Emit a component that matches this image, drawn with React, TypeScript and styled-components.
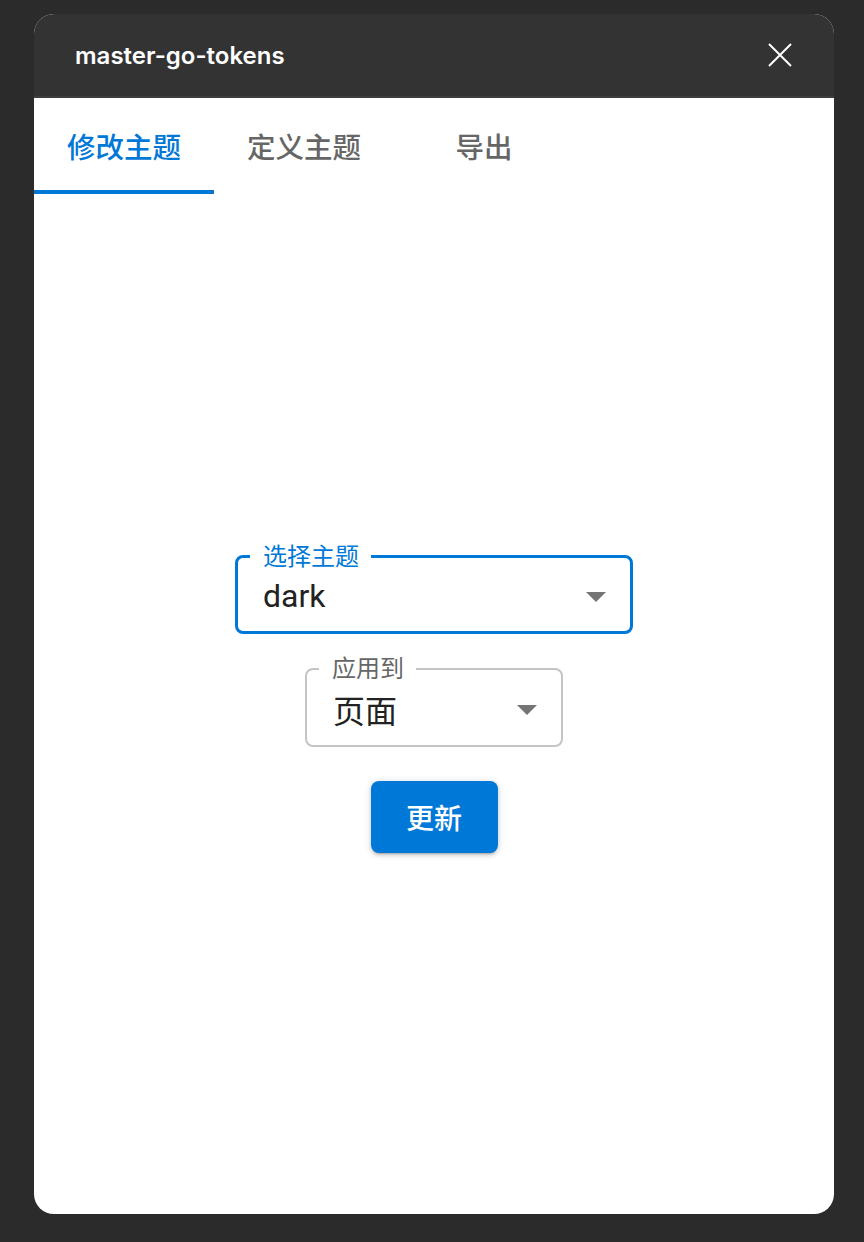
import React from "react";
import styled, { createGlobalStyle } from "styled-components";

const GlobalStyle = createGlobalStyle`
  html, body {
    margin: 0;
    padding: 0;
    background: #2b2b2b;
  }
  body {
    font-family: Roboto, "Noto Sans CJK SC", sans-serif;
  }
`;

const BLUE = "#0078d7";

const Page = styled.div`
  width: 864px;
  height: 1242px;
  box-sizing: border-box;
  padding: 14px 30px 28px 34px;
`;

const Window = styled.div`
  width: 800px;
  height: 1200px;
  border-radius: 20px;
  overflow: hidden;
  background: #ffffff;
  display: flex;
  flex-direction: column;
`;

const Header = styled.div`
  height: 82px;
  flex: none;
  background: #333333;
  border-bottom: 2px solid #3d3d3d;
  display: flex;
  align-items: center;
  justify-content: space-between;
  padding: 0 38px 0 41px;
`;

const Title = styled.div`
  font-family: Inter, "Noto Sans", sans-serif;
  font-size: 24px;
  font-weight: 600;
  color: #ffffff;
  letter-spacing: 0;
`;

const CloseButton = styled.button`
  width: 32px;
  height: 32px;
  border: none;
  background: none;
  padding: 0;
  display: flex;
  align-items: center;
  justify-content: center;
  cursor: pointer;
`;

const TabBar = styled.div`
  display: flex;
  height: 96px;
  flex: none;
`;

const Tab = styled.div<{ $active?: boolean }>`
  width: 180px;
  display: flex;
  align-items: center;
  justify-content: center;
  font-family: "Noto Sans CJK SC", sans-serif;
  font-size: 28.5px;
  font-weight: 500;
  color: ${({ $active }) => ($active ? BLUE : "#666666")};
  border-bottom: 4px solid ${({ $active }) => ($active ? BLUE : "transparent")};
  box-sizing: border-box;
  padding-top: 2px;
`;

const Body = styled.div`
  flex: 1;
  display: flex;
  flex-direction: column;
  align-items: center;
  justify-content: center;
  gap: 34px;
`;

const SelectBox = styled.div<{ $width: number; $focused?: boolean }>`
  position: relative;
  width: ${({ $width }) => $width}px;
  height: 79px;
  box-sizing: border-box;
  border: ${({ $focused }) => ($focused ? `3px solid ${BLUE}` : "2px solid #c4c4c4")};
  border-radius: 8px;
  display: flex;
  align-items: center;
  justify-content: space-between;
  padding: 0 24px 2px ${({ $focused }) => ($focused ? 25 : 26)}px;
`;

const FloatLabel = styled.span<{ $focused?: boolean }>`
  position: absolute;
  top: -18px;
  left: 12px;
  padding: 0 12px 0 13px;
  background: #ffffff;
  font-family: "Noto Sans CJK SC", sans-serif;
  font-size: 24px;
  line-height: 30px;
  color: ${({ $focused }) => ($focused ? BLUE : "#666666")};
`;

const Value = styled.span`
  font-family: Roboto, "Noto Sans CJK SC", sans-serif;
  font-size: 32px;
  color: #222222;
  padding-top: 5px;
`;

const Arrow = styled.span`
  width: 0;
  height: 0;
  border-left: 10px solid transparent;
  border-right: 10px solid transparent;
  border-top: 10px solid #757575;
  margin-top: 6px;
`;

const UpdateButton = styled.button`
  width: 127px;
  height: 72px;
  border: none;
  border-radius: 8px;
  background: ${BLUE};
  color: #ffffff;
  font-family: "Noto Sans CJK SC", sans-serif;
  font-size: 28px;
  font-weight: 500;
  box-shadow: 0 3px 2px -2px rgba(0, 0, 0, 0.2), 0 2px 4px 0 rgba(0, 0, 0, 0.14),
    0 1px 8px 0 rgba(0, 0, 0, 0.12);
  cursor: pointer;
`;

const tabs = ["修改主题", "定义主题", "导出"];

export default function App() {
  return (
    <Page>
      <GlobalStyle />
      <Window>
        <Header>
          <Title>master-go-tokens</Title>
          <CloseButton aria-label="close">
            <svg width="24" height="24" viewBox="0 0 24 24">
              <path d="M1 1L23 23M23 1L1 23" stroke="#ffffff" strokeWidth="2" />
            </svg>
          </CloseButton>
        </Header>
        <TabBar>
          {tabs.map((t, i) => (
            <Tab key={t} $active={i === 0}>
              {t}
            </Tab>
          ))}
        </TabBar>
        <Body>
          <SelectBox $width={398} $focused>
            <FloatLabel $focused>选择主题</FloatLabel>
            <Value>dark</Value>
            <Arrow />
          </SelectBox>
          <SelectBox $width={258}>
            <FloatLabel>应用到</FloatLabel>
            <Value>页面</Value>
            <Arrow />
          </SelectBox>
          <UpdateButton>更新</UpdateButton>
        </Body>
      </Window>
    </Page>
  );
}
